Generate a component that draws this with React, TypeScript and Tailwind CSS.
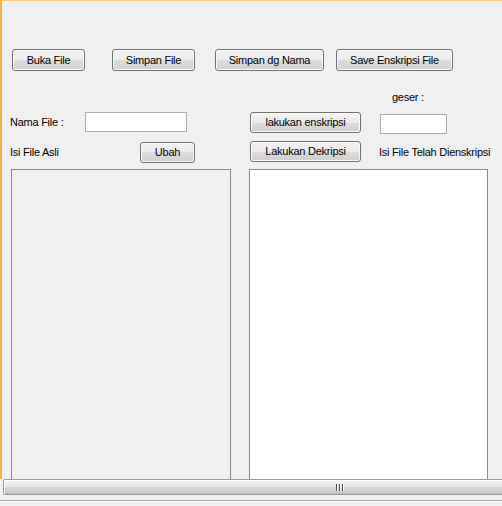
import React from "react";

function Btn({ label, w, className = "" }: { label: string; w: string; className?: string }) {
  return (
    <div
      className={`${w} h-[21px] shrink-0 flex items-center justify-center rounded-[3px] border border-[#707070] bg-[linear-gradient(to_bottom,#f2f2f2_0%,#ebebeb_50%,#dddddd_50%,#cfcfcf_100%)] shadow-[inset_0_0_0_1px_#fbfbfb] text-black ${className}`}
    >
      {label}
    </div>
  );
}

export default function App() {
  return (
    <div className="w-[502px] h-[506px] bg-[#f0f0f0] overflow-hidden flex flex-col font-['Liberation_Sans',Arial,sans-serif] text-[11px] tracking-[-0.25px] text-black">
      <div className="h-[479px] shrink-0 border-t border-t-[#f7c979] border-l-2 border-l-[#f3b347] flex flex-col overflow-hidden">
        {/* Row 1 */}
        <div className="mt-[48px] pl-[10px] flex items-start">
          <Btn label="Buka File" w="w-[73px]" className="h-[22px]" />
          <Btn label="Simpan File" w="w-[83px]" className="ml-[27px] h-[22px]" />
          <Btn label="Simpan dg Nama" w="w-[109px]" className="ml-[20px] h-[22px]" />
          <Btn label="Save Enskripsi File" w="w-[117px]" className="ml-[12px] h-[22px]" />
        </div>
        {/* Row 2 */}
        <div className="mt-[19px] pl-[390px] h-[14px] leading-[14px]">geser :</div>
        {/* Row 3 */}
        <div className="mt-[8px] flex items-start h-[22px]">
          <div className="w-[83px] pl-[8px] leading-[20px] shrink-0">Nama File :</div>
          <div className="w-[102px] h-[20px] shrink-0 bg-white border border-[#abadb3]" />
          <Btn label="lakukan enskripsi" w="w-[111px]" className="ml-[63px]" />
          <div className="ml-[19px] mt-[2px] w-[67px] h-[20px] shrink-0 bg-white border border-[#abadb3]" />
        </div>
        {/* Row 4 */}
        <div className="mt-[7px] flex items-start h-[22px]">
          <div className="w-[138px] pl-[8px] leading-[22px] shrink-0">Isi File Asli</div>
          <Btn label="Ubah" w="w-[55px]" className="mt-[1px]" />
          <Btn label="Lakukan Dekripsi" w="w-[111px]" className="ml-[55px]" />
          <div className="ml-[18px] leading-[22px] whitespace-nowrap">Isi File Telah Dienskripsi</div>
        </div>
        {/* Row 5 */}
        <div className="mt-[6px] flex flex-1 items-stretch">
          <div className="ml-[9px] w-[220px] h-[330px] shrink-0 border border-[#8a8a8a] bg-[#f0f0f0]" />
          <div className="ml-[18px] w-[239px] h-[330px] shrink-0 border border-[#8a8a8a] bg-white" />
        </div>
      </div>
      {/* Horizontal scrollbar */}
      <div className="h-[16px] shrink-0 ml-[3px] border border-r-0 border-[#9a9a9a] rounded-l-[2px] bg-[linear-gradient(to_bottom,#f4f4f4_0%,#e9e9e9_45%,#d6d6d6_55%,#cdcdcd_85%,#b8b8b8_100%)] shadow-[inset_1px_1px_0_#ffffff] flex items-center">
        <div className="ml-[332px] flex gap-[2px] items-center">
          <div className="w-[1px] h-[7px] bg-[#4a4a4a] shadow-[1px_0_0_#ffffff]" />
          <div className="w-[1px] h-[7px] bg-[#4a4a4a] shadow-[1px_0_0_#ffffff]" />
          <div className="w-[1px] h-[7px] bg-[#4a4a4a] shadow-[1px_0_0_#ffffff]" />
        </div>
      </div>
      <div className="h-[5px] shrink-0" />
      <div className="h-[1px] shrink-0 bg-[#a0a0a0]" />
      <div className="h-[1px] shrink-0 bg-[#ffffff]" />
      <div className="flex-1 bg-[#f0f0f0]" />
    </div>
  );
}
